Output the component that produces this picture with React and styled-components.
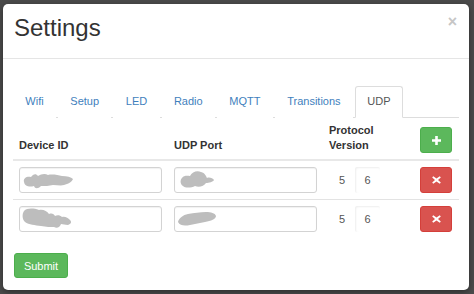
import React from "react";
import styled, { createGlobalStyle } from "styled-components";

const Global = createGlobalStyle`
  html, body { margin: 0; padding: 0; }
  body {
    background: #4b4b4b;
    font-family: "Liberation Sans", Arial, sans-serif;
    font-size: 11px;
    color: #333;
    width: 474px;
    height: 294px;
    overflow: hidden;
  }
`;

const Page = styled.div`
  padding: 4px 5px 4px 3px;
`;

const Modal = styled.div`
  background: #fff;
  border-radius: 5px;
  height: 286px;
  box-sizing: border-box;
  display: flex;
  flex-direction: column;
  box-shadow: 0 2px 6px rgba(0, 0, 0, 0.4);
`;

const Header = styled.div`
  height: 54px;
  border-bottom: 1px solid #e5e5e5;
  display: flex;
  justify-content: space-between;
  align-items: flex-start;
  padding: 0 11px;
`;

const Title = styled.h4`
  margin: 11px 0 0 0;
  font-size: 24px;
  line-height: 1.1;
  font-weight: 400;
  color: #333;
`;

const Close = styled.span`
  margin-top: 10px;
  margin-right: 1px;
  font-size: 16px;
  font-weight: 700;
  line-height: 1;
  color: #c6c6c6;
`;

const Body = styled.div`
  padding: 27px 10px 0 10px;
  flex: 1;
  display: flex;
  flex-direction: column;
`;

const TabList = styled.ul`
  list-style: none;
  margin: 0;
  padding: 0;
  display: flex;
  border-bottom: 1px solid #ddd;
`;

const Tab = styled.li`
  margin: 0 2px -1px 0;
  padding: 7px 11.35px;
  line-height: 15.7px;
  border: 1px solid ${(p) => (p.$active ? "#ddd" : "transparent")};
  border-bottom-color: ${(p) => (p.$active ? "#fff" : "transparent")};
  border-radius: 3px 3px 0 0;
  background: #fff;
  color: ${(p) => (p.$active ? "#555" : "#3f7fbd")};
`;

const Table = styled.table`
  width: 100%;
  border-collapse: collapse;
  table-layout: fixed;
`;

const HeadCell = styled.th`
  text-align: left;
  vertical-align: bottom;
  font-weight: 700;
  line-height: 15.3px;
  padding: 5px 6px 5.5px 6px;
  border-bottom: 2px solid #e8e8e8;
  color: #333;
`;

const Row = styled.tr`
  border-top: ${(p) => (p.$first ? "none" : "1px solid #e3e3e3")};
`;

const Cell = styled.td`
  padding: 6px 6px 6px 6px;
  vertical-align: middle;
`;

const FakeInput = styled.div`
  height: 26px;
  box-sizing: border-box;
  border: 1px solid #d3d3d3;
  border-radius: 3px;
  box-shadow: inset 0 1px 1px rgba(0, 0, 0, 0.06);
  display: flex;
  align-items: center;
  padding-left: 1px;
`;

const Version = styled.div`
  display: flex;
  align-items: center;
  color: #555;
`;

const Major = styled.span`
  padding-left: 10px;
  width: 16px;
`;

const Minor = styled.div`
  width: 25px;
  height: 26px;
  box-sizing: border-box;
  display: flex;
  align-items: center;
  justify-content: center;
  box-shadow: inset 1px 1px 2px rgba(0, 0, 0, 0.07);
  border-radius: 2px;
`;

const IconButton = styled.div`
  width: 32px;
  height: 26px;
  margin-left: 1px;
  border-radius: 3px;
  display: flex;
  align-items: center;
  justify-content: center;
  background: ${(p) => (p.$danger ? "#d9534f" : "#5cb85c")};
  border: 1px solid ${(p) => (p.$danger ? "#d43f3a" : "#4cae4c")};
  box-sizing: border-box;
`;

const Footer = styled.div`
  margin-top: auto;
  padding: 0 0 12px 1px;
`;

const Submit = styled.button`
  width: 54px;
  height: 25px;
  border-radius: 3px;
  background: #5cb85c;
  border: 1px solid #4cae4c;
  color: #fff;
  font-family: "Liberation Sans", Arial, sans-serif;
  font-size: 11px;
  padding: 0;
`;

const PlusIcon = () => (
  <svg width="9" height="9" viewBox="0 0 9 9">
    <path d="M3.2 0h2.6v3.2H9v2.6H5.8V9H3.2V5.8H0V3.2h3.2z" fill="#fff" />
  </svg>
);

const TimesIcon = () => (
  <svg width="9" height="8" viewBox="0 0 9 8">
    <path
      d="M1.2 0.2L4.5 2.6L7.8 0.2L8.8 1.4L6 4L8.8 6.6L7.8 7.8L4.5 5.4L1.2 7.8L0.2 6.6L3 4L0.2 1.4z"
      fill="#fff"
    />
  </svg>
);

const blobs = [
  {
    w: 54,
    h: 20,
    d: "M3 12 C2 8 6 6 10 7 C12 4 15 3 17 6 C20 4 24 3 27 5 C31 4 37 5 41 6 C46 6 50 7 52 9 C51 12 47 14 43 15 C40 16 36 15 32 15 C28 16 24 16 20 16 C17 19 14 19 13 16 C9 17 4 17 3 12z",
  },
  {
    w: 44,
    h: 22,
    d: "M6 9 C8 6 12 7 14 7 C16 3 21 1 25 3 C29 4 30 7 31 9 C33 8 37 9 38 11 C37 13 33 14 30 14 C28 17 23 19 19 17 C15 19 9 19 7 17 C4 15 4 11 6 9z",
  },
  {
    w: 56,
    h: 24,
    d: "M3 4 C6 1 12 1 18 3 C22 2 26 4 28 7 C31 6 33 7 34 9 C36 8 39 8 41 10 C44 9 47 11 49 13 C51 15 50 17 47 18 C44 18 42 17 40 17 C39 20 36 22 33 20 C30 20 25 20 20 19 C14 18 8 18 4 15 C1 12 1 7 3 4z",
  },
  {
    w: 44,
    h: 18,
    d: "M2 12 C3 8 7 5 12 4 C18 3 24 2 30 2 C35 2 39 3 40 6 C40 9 35 11 29 12 C24 13 19 14 14 15 C9 16 4 16 2 12z",
  },
];

const Blob = ({ b }) => (
  <svg width={b.w} height={b.h} viewBox={`0 0 ${b.w} ${b.h}`}>
    <path d={b.d} fill="#bdbdbd" />
  </svg>
);

const tabs = ["Wifi", "Setup", "LED", "Radio", "MQTT", "Transitions", "UDP"];

const rows = [
  { id: blobs[0], port: blobs[1], major: 5, minor: 6 },
  { id: blobs[2], port: blobs[3], major: 5, minor: 6 },
];

export default function App() {
  return (
    <>
      <Global />
      <Page>
        <Modal>
          <Header>
            <Title>Settings</Title>
            <Close>×</Close>
          </Header>
          <Body>
            <TabList>
              {tabs.map((t) => (
                <Tab key={t} $active={t === "UDP"}>
                  {t}
                </Tab>
              ))}
            </TabList>
            <Table>
              <colgroup>
                <col style={{ width: 155 }} />
                <col style={{ width: 155 }} />
                <col style={{ width: 90 }} />
                <col style={{ width: 46 }} />
              </colgroup>
              <thead>
                <tr>
                  <HeadCell>Device ID</HeadCell>
                  <HeadCell>UDP Port</HeadCell>
                  <HeadCell>
                    Protocol
                    <br />
                    Version
                  </HeadCell>
                  <HeadCell>
                    <IconButton>
                      <PlusIcon />
                    </IconButton>
                  </HeadCell>
                </tr>
              </thead>
              <tbody>
                {rows.map((r, i) => (
                  <Row key={i} $first={i === 0}>
                    <Cell>
                      <FakeInput>
                        <Blob b={r.id} />
                      </FakeInput>
                    </Cell>
                    <Cell>
                      <FakeInput>
                        <Blob b={r.port} />
                      </FakeInput>
                    </Cell>
                    <Cell>
                      <Version>
                        <Major>{r.major}</Major>
                        <Minor>{r.minor}</Minor>
                      </Version>
                    </Cell>
                    <Cell>
                      <IconButton $danger>
                        <TimesIcon />
                      </IconButton>
                    </Cell>
                  </Row>
                ))}
              </tbody>
            </Table>
            <Footer>
              <Submit>Submit</Submit>
            </Footer>
          </Body>
        </Modal>
      </Page>
    </>
  );
}
